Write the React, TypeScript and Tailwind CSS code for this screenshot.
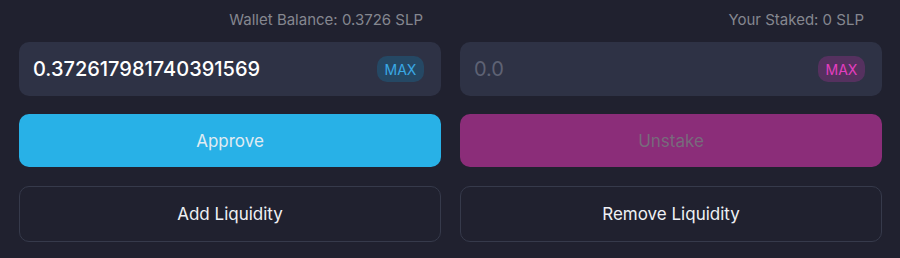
import React from 'react';

type ColumnProps = {
  label: string;
  value: string;
  placeholder?: boolean;
  accent: 'blue' | 'pink';
  action: string;
  secondary: string;
};

function Column({ label, value, placeholder, accent, action, secondary }: ColumnProps) {
  const isBlue = accent === 'blue';
  return (
    <div className="flex flex-col">
      <div className="flex h-[42px] items-center justify-end pr-[18px] pb-[2px] text-[15px] text-[#85878f]">
        {label}
      </div>
      <div className="flex h-[54px] items-center justify-between rounded-[10px] bg-[#2e3245] pl-[14px] pr-[17px]">
        <span
          className={
            placeholder
              ? 'text-[20px] text-[#5e6274]'
              : 'text-[20px] font-medium text-white'
          }
        >
          {value}
        </span>
        <span
          className={
            isBlue
              ? 'flex h-[26px] w-[47px] items-center justify-center rounded-[10px] bg-[#254864] text-[14px] text-[#3aa8e4]'
              : 'flex h-[26px] w-[47px] items-center justify-center rounded-[10px] bg-[#55315f] text-[14px] text-[#e43ec0]'
          }
        >
          MAX
        </span>
      </div>
      <button
        className={
          isBlue
            ? 'mt-[18px] h-[53px] rounded-[10px] bg-[#28b1e7] pt-[2px] text-[17px] text-[#e1ecf2]'
            : 'mt-[18px] h-[53px] rounded-[10px] bg-[#8b2d79] pt-[2px] text-[17px] text-[#786a7c]'
        }
      >
        {action}
      </button>
      <button className="mt-[19px] h-[56px] rounded-[10px] border border-[#363a4b] pt-[2px] text-[17px] text-[#eef0f4]">
        {secondary}
      </button>
    </div>
  );
}

export default function App() {
  return (
    <div
      className="h-[258px] w-[900px] bg-[#20212f] pl-[19px] pr-[18px]"
      style={{ fontFamily: 'Inter, "Noto Sans", sans-serif' }}
    >
      <div className="grid grid-cols-2 gap-x-[19px]">
        <Column
          label="Wallet Balance: 0.3726 SLP"
          value="0.372617981740391569"
          accent="blue"
          action="Approve"
          secondary="Add Liquidity"
        />
        <Column
          label="Your Staked: 0 SLP"
          value="0.0"
          placeholder
          accent="pink"
          action="Unstake"
          secondary="Remove Liquidity"
        />
      </div>
    </div>
  );
}
